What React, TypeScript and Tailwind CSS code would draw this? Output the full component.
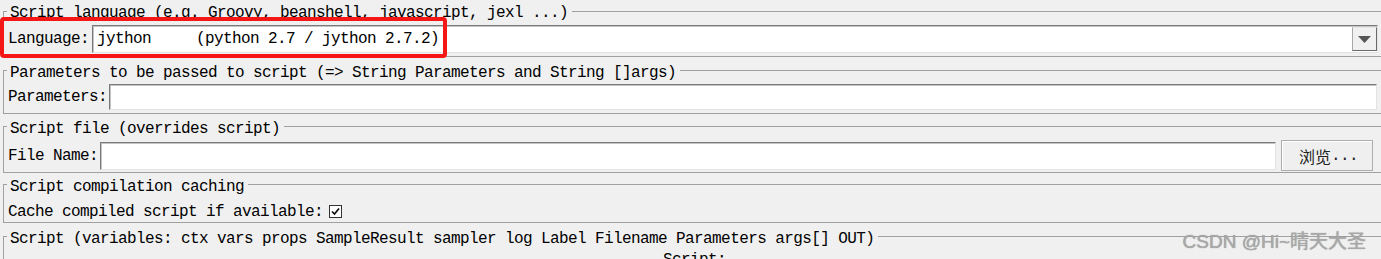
export default function App() {
  const inset =
    "border-t border-l border-t-[#7a7a7a] border-l-[#7a7a7a] border-r border-b border-r-[#e3e3e3] border-b-[#e3e3e3] bg-white shadow-[inset_1px_1px_0_#c4c4c4]";
  return (
    <div className="relative h-[259px] w-full overflow-hidden bg-[#f0f0f0] pt-[1px] font-['Liberation_Mono',monospace] text-[16px] leading-[16px] tracking-[-0.6px] text-black">
      {/* Section 1 */}
      <fieldset className="ml-[3px] border-b border-l border-t border-[#a0a0a0] pb-[3px] pl-[4px] pr-[3px] pt-[4px]">
        <legend className="-ml-[1px] whitespace-pre pl-[3px] pr-[4px] pt-[4px]">
          Script language (e.g. Groovy, beanshell, javascript, jexl ...)
        </legend>
        <div className="flex items-center gap-[3px]">
          <span className="whitespace-pre">Language:</span>
          <div className={`flex h-[28px] flex-1 items-stretch ${inset}`}>
            <div className="flex flex-1 items-center whitespace-pre pl-[4px]">
              jython     (python 2.7 / jython 2.7.2)
            </div>
            <div className="my-[1px] flex w-[25px] items-center justify-center border border-l-[#a8a8a8] border-t-[#e8e8e8] border-r-[#6a6a6a] border-b-[#6a6a6a] bg-[#f0f0f0]">
              <svg width="13" height="7" viewBox="0 0 13 7">
                <polygon points="0,0 13,0 6.5,7" fill="#555555" />
              </svg>
            </div>
          </div>
        </div>
      </fieldset>

      {/* Section 2 */}
      <fieldset className="ml-[3px] mt-[3px] border-b border-l border-t border-[#a0a0a0] pb-[3px] pl-[4px] pr-[4px] pt-[3px]">
        <legend className="-ml-[1px] whitespace-pre pl-[3px] pr-[4px] pt-[5px]">
          Parameters to be passed to script (=&gt; String Parameters and String []args)
        </legend>
        <div className="flex items-center gap-[2px]">
          <span className="whitespace-pre">Parameters:</span>
          <div className={`h-[26px] flex-1 ${inset}`} />
        </div>
      </fieldset>

      {/* Section 3 */}
      <fieldset className="ml-[3px] mt-[2px] border-b border-l border-t border-[#a0a0a0] pb-[1px] pl-[4px] pr-[8px] pt-[3px]">
        <legend className="-ml-[1px] whitespace-pre pl-[3px] pr-[4px] pt-[5px]">
          Script file (overrides script)
        </legend>
        <div className="flex h-[31px] items-center">
          <span className="whitespace-pre">File Name:</span>
          <div className={`ml-[2px] h-[28px] flex-1 ${inset}`} />
          <div className="ml-[5px] flex h-[31px] w-[92px] items-center justify-center border border-[#adadad] bg-[#efefef] pl-[3px] text-[#222] shadow-[inset_1px_1px_0_#ffffff]">
            <span className="font-['Noto_Sans_CJK_SC',sans-serif] text-[16px] tracking-normal">浏览</span>
            <span className="whitespace-pre">...</span>
          </div>
        </div>
      </fieldset>

      {/* Section 4 */}
      <fieldset className="ml-[3px] mt-[1px] border-b border-l border-t border-[#a0a0a0] pb-0 pl-[4px] pr-[4px] pt-[6px]">
        <legend className="-ml-[1px] whitespace-pre pl-[3px] pr-[4px] pt-[5px]">
          Script compilation caching
        </legend>
        <div className="flex h-[21px] items-center">
          <span className="whitespace-pre">Cache compiled script if available:</span>
          <div className="ml-[6px] flex h-[13px] w-[13px] items-center justify-center border border-[#333333] bg-white">
            <svg width="11" height="11" viewBox="0 0 11 11">
              <path d="M2 5.5 L4.5 8 L9 2.5" fill="none" stroke="#111" strokeWidth="1.7" />
            </svg>
          </div>
        </div>
      </fieldset>

      {/* Section 5 */}
      <fieldset className="ml-[3px] mt-[3px] border-l border-t border-[#a0a0a0] pl-[4px] pt-[3px]">
        <legend className="-ml-[1px] whitespace-pre pl-[3px] pr-[4px] pt-[5px]">
          Script (variables: ctx vars props SampleResult sampler log Label Filename Parameters args[] OUT)
        </legend>
        <div className="text-center leading-[20px]">Script:</div>
      </fieldset>

      {/* Red highlight box */}
      <div className="pointer-events-none absolute left-0 top-[17px] h-[41px] w-[447px] rounded-[4px] border-[4px] border-[#f51616]" />

      {/* Watermark */}
      <div className="pointer-events-none absolute right-[15px] top-[228px] whitespace-pre font-['Liberation_Sans','Noto_Sans_CJK_SC',sans-serif] text-[19px] leading-[24px] tracking-normal text-[#a9a9a9] [text-shadow:0_0_1px_#8a8a8a]">
        CSDN @Hi~<span className="font-['Noto_Sans_CJK_SC',sans-serif]">晴天大圣</span>
      </div>
    </div>
  );
}
